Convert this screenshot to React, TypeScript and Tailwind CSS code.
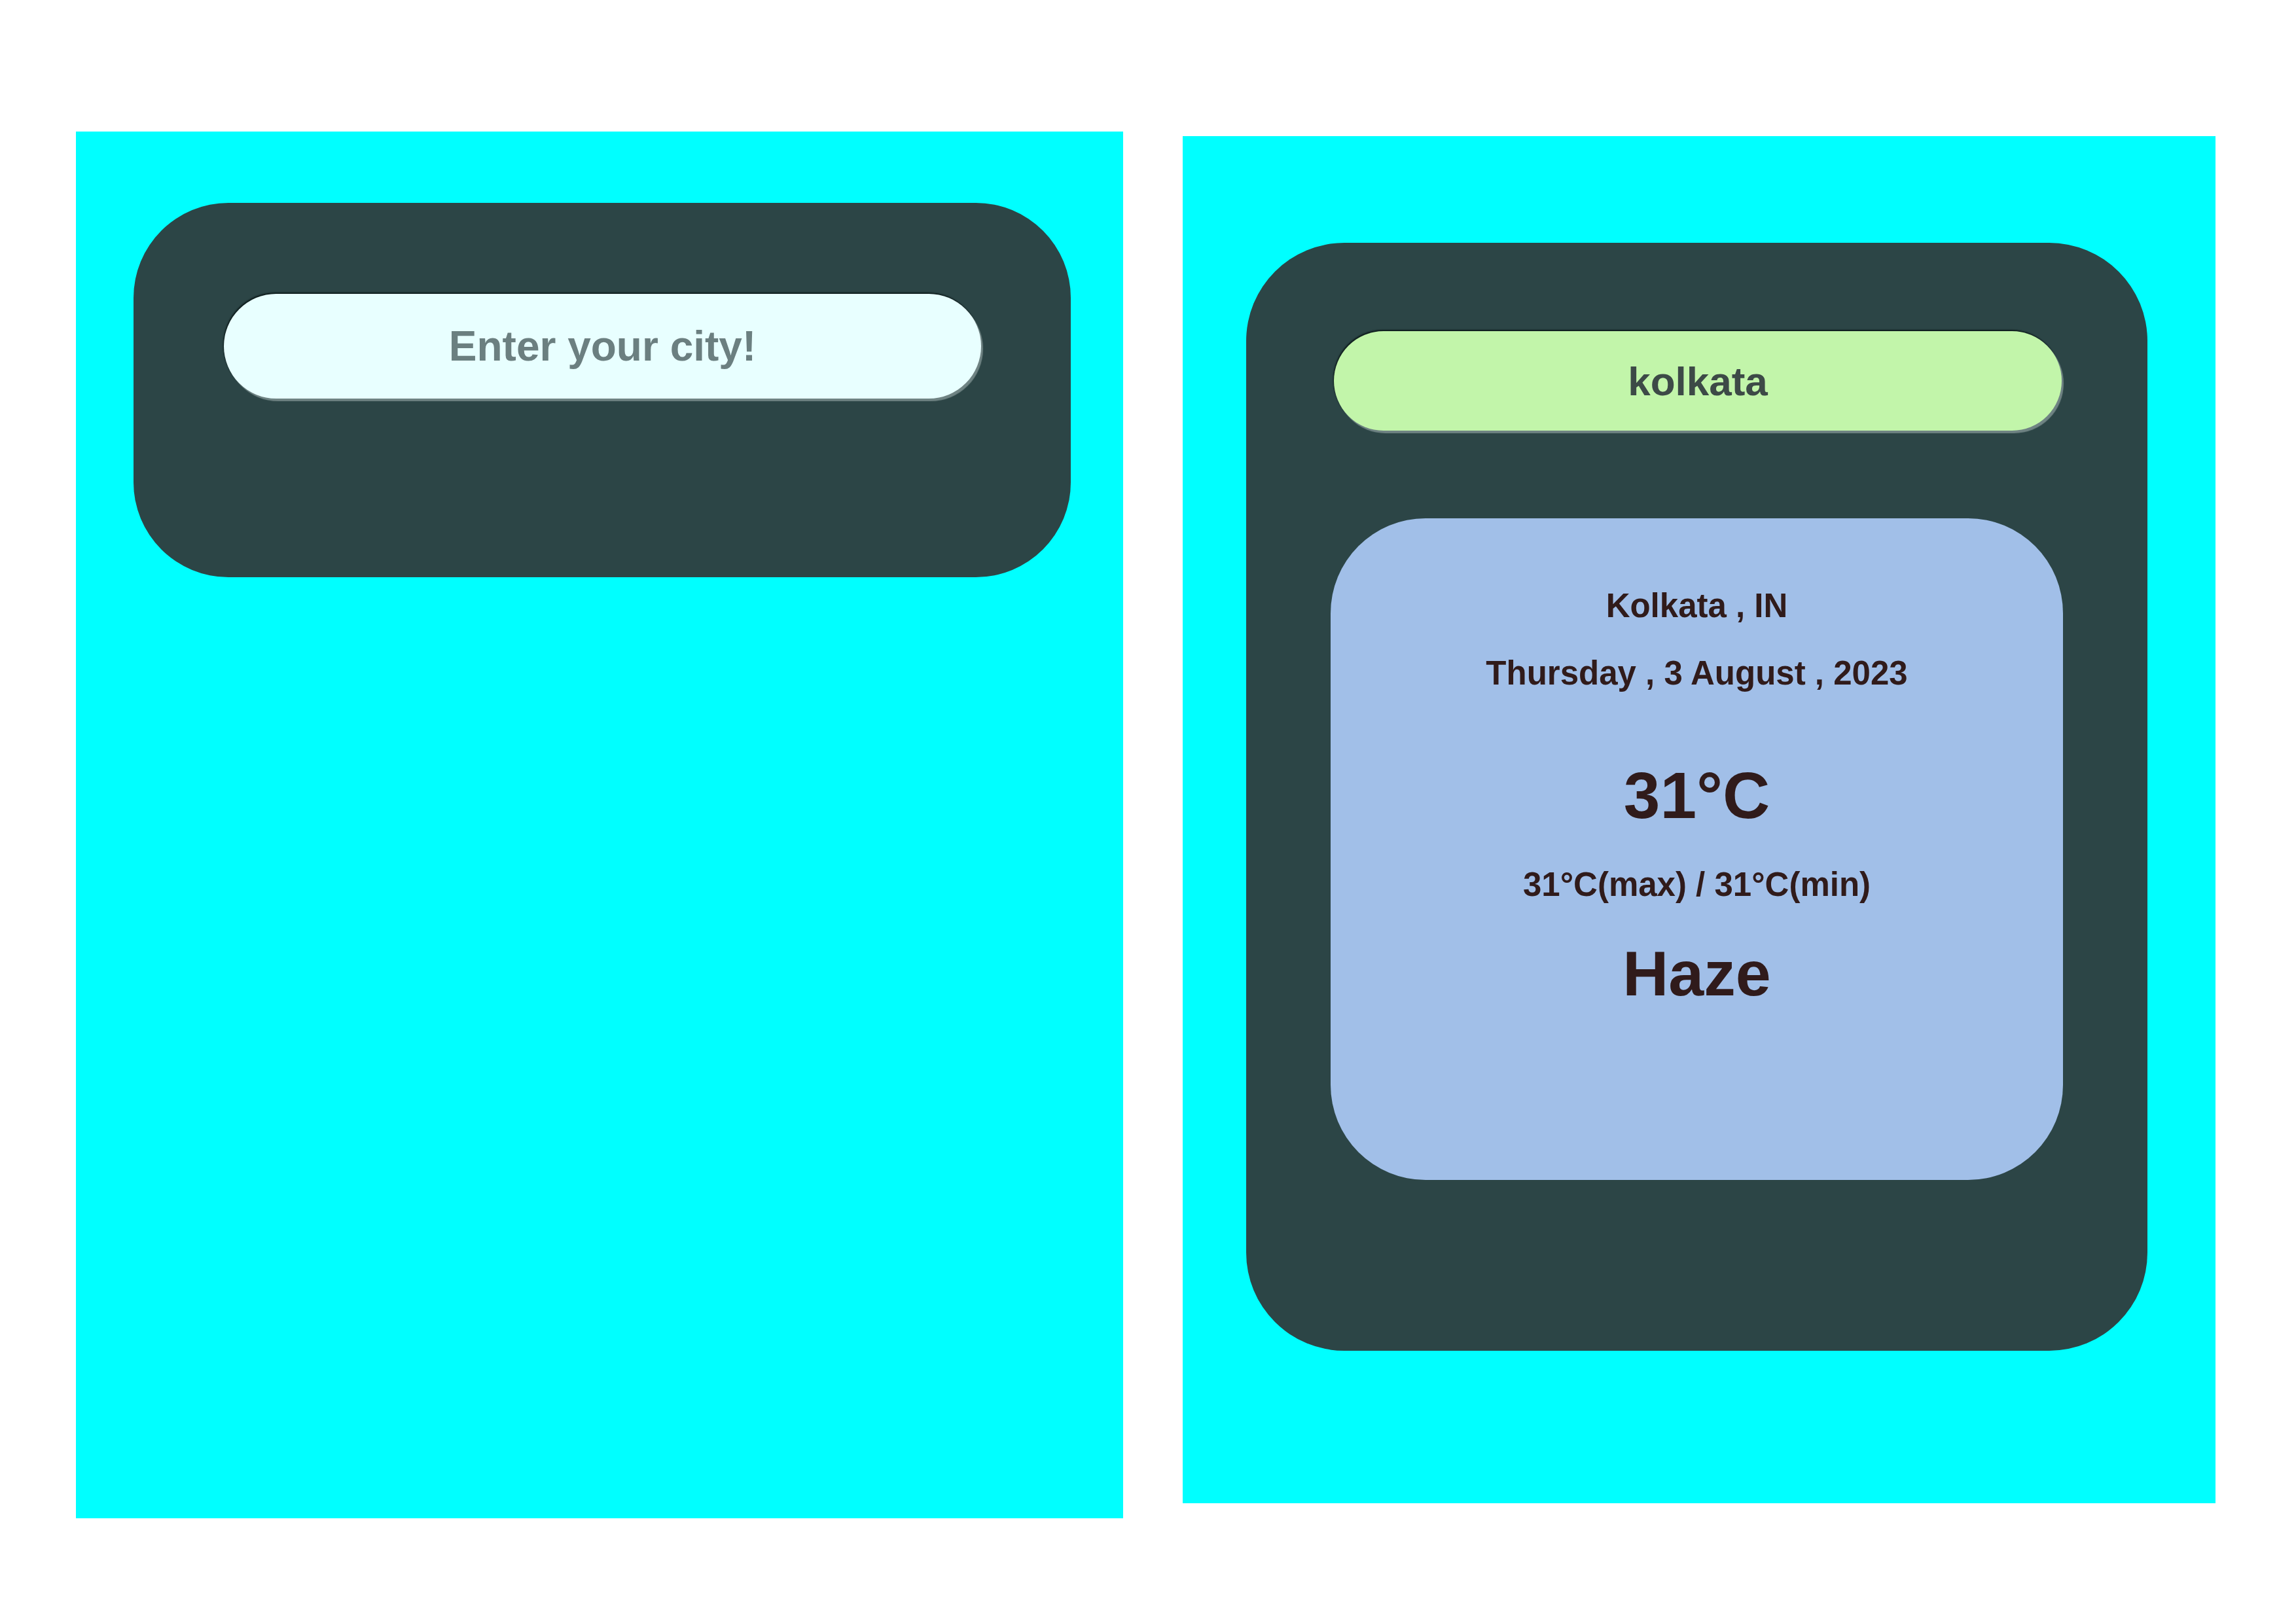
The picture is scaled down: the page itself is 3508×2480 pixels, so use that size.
import React from "react";

const App: React.FC = () => {
  return (
    <div className="w-[3508px] h-[2480px] bg-white overflow-hidden font-['Liberation_Sans',Arial,sans-serif]">
      <div className="flex items-start pl-[116px] pt-[201px] gap-[91px]">
        {/* Empty state */}
        <div className="w-[1600px] h-[2119px] bg-[#00ffff] pl-[88px] pt-[109px]">
          <div className="w-[1432px] h-[572px] rounded-[145px] bg-[#2c4546] pl-[138px] pt-[139px]">
            <input
              placeholder="Enter your city!"
              className="w-[1157px] h-[160px] rounded-full bg-[#e8ffff] text-center text-[64px] font-bold text-[#3d4a47] placeholder:text-[#6b7f80] outline-none shadow-[3px_4px_1px_#6f8383,-1px_-2px_2px_#0e1c1c]"
            />
          </div>
        </div>

        {/* Result state */}
        <div className="mt-[7px] w-[1578px] h-[2089px] bg-[#00ffff] pl-[97px] pt-[163px]">
          <div className="w-[1377px] h-[1693px] rounded-[150px] bg-[#2c4546] pl-[134px] pt-[135px]">
            <input
              defaultValue="kolkata"
              className="w-[1112px] h-[152px] rounded-full bg-[#c2f5aa] text-center text-[62px] font-bold text-[#3d4a47] outline-none shadow-[3px_4px_1px_#6f8383,-1px_-2px_2px_#0e1c1c]"
            />
            <div className="-ml-[5px] mt-[134px] w-[1119px] h-[1011px] rounded-[145px] bg-[#a1bfe8] pt-[108px] flex flex-col items-center text-[#301b1b] font-bold leading-none">
              <div className="text-[51px]">Kolkata , IN</div>
              <div className="mt-[52px] text-[51px]">Thursday , 3 August , 2023</div>
              <div className="mt-[111px] text-[100px]">31°C</div>
              <div className="mt-[61px] text-[51px]">31°C(max) / 31°C(min)</div>
              <div className="mt-[62px] text-[97px]">Haze</div>
            </div>
          </div>
        </div>
      </div>
    </div>
  );
};

export default App;
